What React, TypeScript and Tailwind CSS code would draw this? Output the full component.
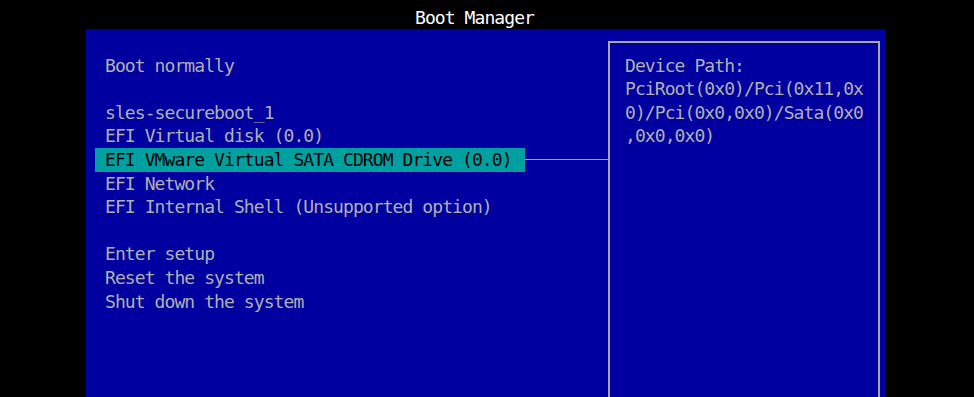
const MENU: (string | null)[] = [
  'Boot normally',
  null,
  'sles-secureboot_1',
  'EFI Virtual disk (0.0)',
  'EFI VMware Virtual SATA CDROM Drive (0.0)',
  'EFI Network',
  'EFI Internal Shell (Unsupported option)',
  null,
  'Enter setup',
  'Reset the system',
  'Shut down the system',
];

const SELECTED = 4;

export default function App() {
  return (
    <div className="h-[397px] overflow-hidden bg-black font-['DejaVu_Sans_Mono',monospace] text-[18px] leading-[23.6px] tracking-[-0.92px] text-[#b0b0b0]">
      <div className="h-[29px] pl-[415px] pt-[6px] text-white">Boot Manager</div>

      <div className="ml-[86px] flex h-[368px] w-[799px] bg-[#0000a0]">
        <div className="w-[522px] pl-[9px] pt-[24.6px]">
          {MENU.map((item, i) =>
            item === null ? (
              <div key={i} className="h-[23.6px]" />
            ) : i === SELECTED ? (
              <div key={i} className="flex h-[23.6px] items-center">
                <div className="h-[24px] w-[430px] shrink-0 bg-[#00a0a0] pl-[10px] text-black">
                  {item}
                </div>
                <div className="h-px flex-1 bg-[#a8a8a8]" />
              </div>
            ) : (
              <div key={i} className="h-[23.6px] whitespace-pre pl-[10px]">
                {item}
              </div>
            )
          )}
        </div>

        <div className="mt-[12px] w-[272px] shrink-0 border-2 border-b-0 border-[#a8a8a8] pl-[15px] pt-[10.6px]">
          <div>Device Path:</div>
          <div className="w-[242px] break-all [line-break:anywhere]">
            PciRoot(0x0)/Pci(0x11,0x0)/Pci(0x0,0x0)/Sata(0x0,0x0,0x0)
          </div>
        </div>
      </div>
    </div>
  );
}
